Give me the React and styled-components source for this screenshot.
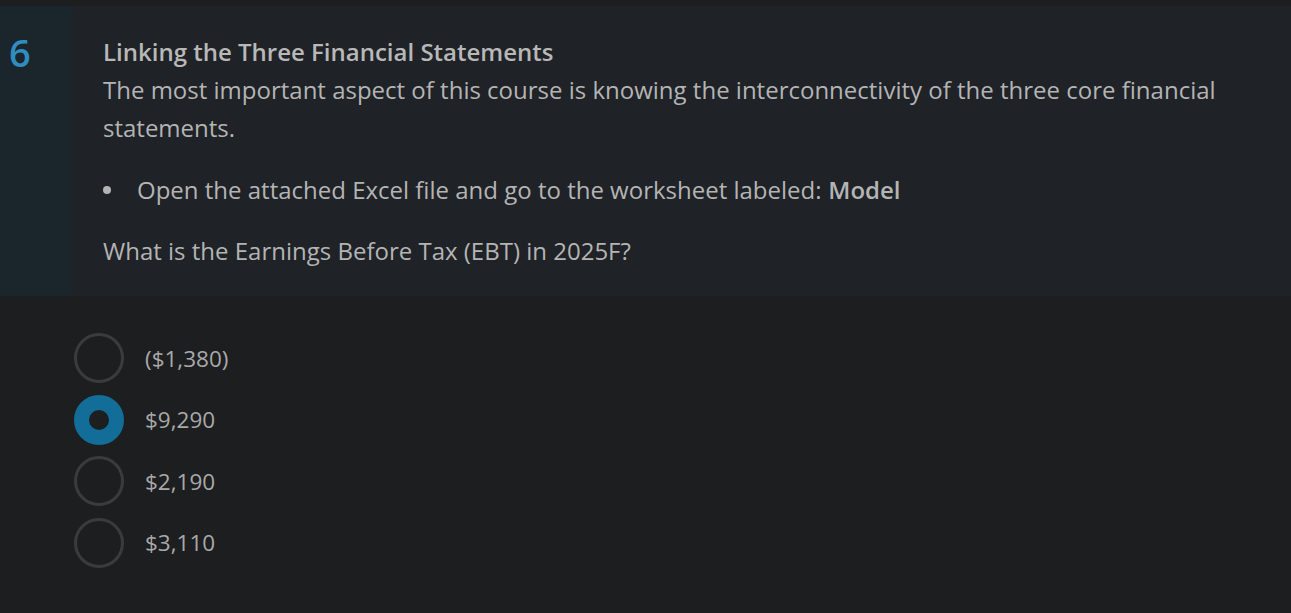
import React, { useState } from "react";
import styled, { createGlobalStyle } from "styled-components";

const Global = createGlobalStyle`
  html, body {
    margin: 0;
    background: #1d1e20;
  }
  body {
    font-family: "Open Sans", "Noto Sans", sans-serif;
    color: #b4b4b4;
  }
`;

const Page = styled.div`
  width: 1291px;
  height: 613px;
  padding-top: 6px;
  box-sizing: border-box;
  background: #1d1e20;
`;

const Question = styled.section`
  display: flex;
  height: 290px;
  background: #1f2226;
`;

const NumberCol = styled.div`
  width: 72px;
  flex-shrink: 0;
  background: #1b252c;
  color: #2f8dc0;
  font-size: 38px;
  font-weight: 600;
  padding: 24px 0 0 9px;
  box-sizing: border-box;
  line-height: 44px;
`;

const Body = styled.div`
  padding: 27px 40px 0 31px;
  font-size: 24px;
  line-height: 38px;
`;

const Title = styled.div`
  font-weight: 600;
  color: #b8b8b8;
`;

const Text = styled.p`
  margin: 0;
`;

const List = styled.ul`
  list-style: none;
  margin: 24px 0 23px;
  padding: 0;
`;

const Item = styled.li`
  display: flex;
  align-items: center;
  &::before {
    content: "";
    width: 8px;
    height: 8px;
    border-radius: 50%;
    background: #b4b4b4;
    margin-right: 26px;
    flex-shrink: 0;
  }
`;

const Strong = styled.b`
  font-weight: 600;
  margin-left: 0.28em;
`;

const Options = styled.div`
  display: flex;
  flex-direction: column;
  gap: 11.67px;
  padding: 37px 0 0 74px;
`;

const Option = styled.label`
  display: flex;
  align-items: center;
  gap: 21px;
  cursor: pointer;
  font-size: 22.5px;
  color: #a9a9a9;
`;

const Radio = styled.span`
  width: 50px;
  height: 50px;
  box-sizing: border-box;
  border-radius: 50%;
  border: ${(p) => (p.checked ? "15px solid #126e98" : "3px solid #3a3b3d")};
  background: #1d1e20;
`;

const answers = ["($1,380)", "$9,290", "$2,190", "$3,110"];

export default function App() {
  const [selected, setSelected] = useState(1);
  return (
    <Page>
      <Global />
      <Question>
        <NumberCol>6</NumberCol>
        <Body>
          <Title>Linking the Three Financial Statements</Title>
          <Text>
            The most important aspect of this course is knowing the interconnectivity of the three core financial
            statements.
          </Text>
          <List>
            <Item>
              Open the attached Excel file and go to the worksheet labeled:<Strong>Model</Strong>
            </Item>
          </List>
          <Text>What is the Earnings Before Tax (EBT) in 2025F?</Text>
        </Body>
      </Question>
      <Options>
        {answers.map((a, i) => (
          <Option key={a} onClick={() => setSelected(i)}>
            <Radio checked={selected === i} />
            {a}
          </Option>
        ))}
      </Options>
    </Page>
  );
}
